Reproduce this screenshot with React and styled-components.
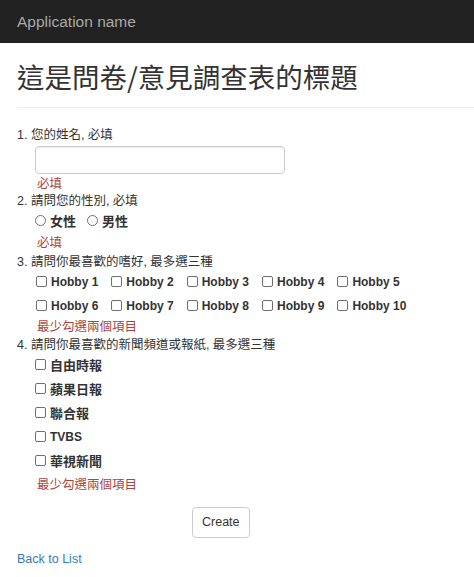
import React from 'react';
import styled, { createGlobalStyle } from 'styled-components';

const GlobalStyle = createGlobalStyle`
  html, body {
    margin: 0;
    padding: 0;
    background: #fff;
  }
  body {
    font-family: "Liberation Sans", "Noto Sans CJK TC", sans-serif;
    font-size: 12.5px;
    line-height: 17px;
    color: #333;
  }
`;

const Navbar = styled.div`
  height: 43px;
  background: #222;
  display: flex;
  align-items: center;
  padding-left: 17px;
`;

const Brand = styled.span`
  font-size: 15.5px;
  color: #a9a9a9;
`;

const Container = styled.div`
  padding-left: 17px;
`;

const Title = styled.h2`
  margin: 18px 0 0;
  font-family: "Noto Sans CJK TC", sans-serif;
  font-weight: 400;
  font-size: 27.5px;
  line-height: 30px;
  color: #333;
`;

const Divider = styled.hr`
  margin: 16px 0 0;
  border: 0;
  border-top: 1px solid #eee;
`;

const Question = styled.div`
  margin-top: ${(props) => props.gap || 0}px;
`;

const QLabel = styled.div`
  height: 17px;
  line-height: 17px;
`;

const TextInput = styled.input`
  display: block;
  box-sizing: border-box;
  width: 250px;
  height: 28px;
  margin: 2px 0 0 18px;
  padding: 4px 10px;
  border: 1px solid #ccc;
  border-radius: 4px;
  box-shadow: inset 0 1px 1px rgba(0, 0, 0, 0.075);
  font: inherit;
`;

const ErrorText = styled.div`
  margin-top: ${(props) => props.gap || 0}px;
  padding-left: 20px;
  height: 17px;
  color: #a94442;
`;

const Options = styled.div`
  display: flex;
  flex-wrap: wrap;
  max-width: 400px;
  padding-left: ${(props) => props.indent || 18}px;
  row-gap: 2px;
  flex-direction: ${(props) => props.column ? 'column' : 'row'};
`;

const Option = styled.label`
  display: inline-flex;
  align-items: center;
  height: 22px;
  margin-right: ${(props) => props.spacing || 0}px;
  font-weight: 700;
  font-size: ${(props) => props.size || 12}px;
  color: #333;
`;

const Check = styled.input`
  appearance: none;
  box-sizing: border-box;
  width: 11px;
  height: 11px;
  margin: 0 4px 0 0;
  border: 1px solid #6f6f6f;
  border-radius: ${(props) => props.type === 'radio' ? '50%' : '2px'};
  background: #fff;
  transform: translateY(-1px);
`;

const Button = styled.button`
  display: block;
  box-sizing: border-box;
  height: 31px;
  margin: 12.5px 0 0 175px;
  padding: 0 9px;
  background: #fff;
  border: 1px solid #ccc;
  border-radius: 4px;
  font-family: "Liberation Sans", sans-serif;
  font-size: 12.5px;
  color: #333;
`;

const BackLink = styled.a`
  display: block;
  margin-top: 13.5px;
  width: max-content;
  color: #337ab7;
  text-decoration: none;
`;

const hobbies = ['Hobby 1', 'Hobby 2', 'Hobby 3', 'Hobby 4', 'Hobby 5', 'Hobby 6', 'Hobby 7', 'Hobby 8', 'Hobby 9', 'Hobby 10'];
const news = ['自由時報', '蘋果日報', '聯合報', 'TVBS', '華視新聞'];

const App = () => {
    return (
        <>
            <GlobalStyle />
            <Navbar>
                <Brand>Application name</Brand>
            </Navbar>
            <Container>
                <Title>這是問卷/意見調查表的標題</Title>
                <Divider />

                <Question gap={18.5}>
                    <QLabel>1. 您的姓名, 必填</QLabel>
                    <TextInput type="text" />
                    <ErrorText gap={2.5}>必填</ErrorText>
                </Question>

                <Question>
                    <QLabel>2. 請問您的性別, 必填</QLabel>
                    <Options>
                        <Option size={13} spacing={11}><Check type="radio" name="sex" />女性</Option>
                        <Option size={13}><Check type="radio" name="sex" />男性</Option>
                    </Options>
                    <ErrorText gap={3}>必填</ErrorText>
                </Question>

                <Question gap={2}>
                    <QLabel>3. 請問你最喜歡的嗜好, 最多選三種</QLabel>
                    <Options indent={19}>
                        {hobbies.map((h) => (
                            <Option key={h} spacing={13}><Check type="checkbox" />{h}</Option>
                        ))}
                    </Options>
                    <ErrorText gap={2}>最少勾選兩個項目</ErrorText>
                </Question>

                <Question gap={1}>
                    <QLabel>4. 請問你最喜歡的新聞頻道或報紙, 最多選三種</QLabel>
                    <Options column>
                        {news.map((n) => (
                            <Option key={n} size={/^[A-Z]+$/.test(n) ? 12 : 13}><Check type="checkbox" />{n}</Option>
                        ))}
                    </Options>
                    <ErrorText gap={5}>最少勾選兩個項目</ErrorText>
                </Question>

                <Button type="button">Create</Button>
                <BackLink href="#">Back to List</BackLink>
            </Container>
        </>
    );
};

export default App;
